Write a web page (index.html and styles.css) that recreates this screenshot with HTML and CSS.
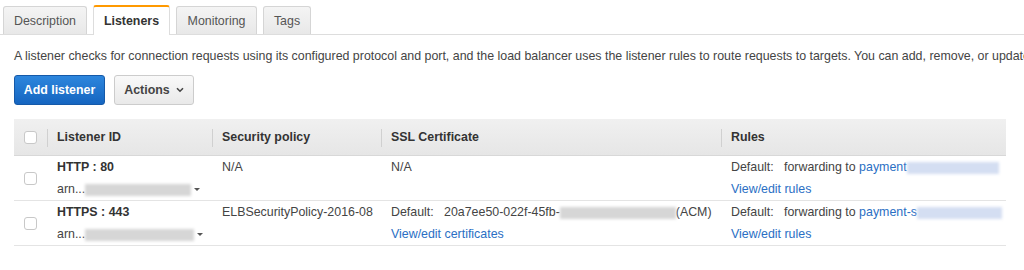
FILE: index.html
```html
<!DOCTYPE html>
<html>
<head>
<meta charset="utf-8">
<link rel="stylesheet" href="styles.css">
</head>
<body>
<div class="tabs">
  <div class="tab">Description</div>
  <div class="tab active">Listeners</div>
  <div class="tab">Monitoring</div>
  <div class="tab">Tags</div>
</div>
<p class="intro">A listener checks for connection requests using its configured protocol and port, and the load balancer uses the listener rules to route requests to targets. You can add, remove, or update listeners and their rules.</p>
<div class="toolbar">
  <button class="btn primary">Add listener</button>
  <button class="btn secondary">Actions <svg class="chev" width="8" height="6" viewBox="0 0 8 6"><path d="M1 1.2 L4 4.2 L7 1.2" fill="none" stroke="#444" stroke-width="1.6"/></svg></button>
</div>
<div class="table">
  <div class="row head">
    <div class="cell chk"><span class="box"></span></div>
    <div class="cell"><span class="sep"></span>Listener ID</div>
    <div class="cell"><span class="sep"></span>Security policy</div>
    <div class="cell"><span class="sep"></span>SSL Certificate</div>
    <div class="cell"><span class="sep"></span>Rules</div>
  </div>
  <div class="row">
    <div class="cell chk"><span class="box"></span></div>
    <div class="cell">
      <div class="line strong">HTTP : 80</div>
      <div class="line">arn...<span class="redact gray w106"></span><span class="caret"></span></div>
    </div>
    <div class="cell"><div class="line">N/A</div></div>
    <div class="cell"><div class="line">N/A</div></div>
    <div class="cell">
      <div class="line">Default:&nbsp;&nbsp; forwarding to <a class="link">payment</a><span class="redact blue w92"></span></div>
      <div class="line"><a class="link">View/edit rules</a></div>
    </div>
  </div>
  <div class="row">
    <div class="cell chk"><span class="box"></span></div>
    <div class="cell">
      <div class="line strong">HTTPS : 443</div>
      <div class="line">arn...<span class="redact gray w109"></span><span class="caret"></span></div>
    </div>
    <div class="cell"><div class="line">ELBSecurityPolicy-2016-08</div></div>
    <div class="cell">
      <div class="line">Default:&nbsp;&nbsp; 20a7ee50-022f-45fb-<span class="redact gray w116"></span>(ACM)</div>
      <div class="line"><a class="link">View/edit certificates</a></div>
    </div>
    <div class="cell">
      <div class="line">Default:&nbsp;&nbsp; forwarding to <a class="link">payment-s</a><span class="redact blue w85"></span></div>
      <div class="line"><a class="link">View/edit rules</a></div>
    </div>
  </div>
</div>
</body>
</html>
```
FILE: styles.css
```css
html, body {
  margin: 0;
  padding: 0;
  background: #fff;
  overflow: hidden;
}
body {
  font-family: "Liberation Sans", Arial, sans-serif;
  font-size: 12.4px;
  color: #444;
  width: 1024px;
  height: 270px;
}
.tabs {
  display: flex;
  gap: 6px;
  padding: 5px 0 0 3px;
  border-bottom: 1px solid #ddd;
  height: 29px;
  box-sizing: content-box;
}
.tab {
  height: 28px;
  margin-top: 1px;
  padding: 0;
  box-sizing: border-box;
  border: 1px solid #d5d5d5;
  border-bottom: none;
  border-radius: 3px 3px 0 0;
  background: linear-gradient(#f4f4f4, #e8e8e8);
  color: #555;
  display: flex;
  align-items: center;
  justify-content: center;
}
.tab:nth-child(1) { width: 84px; }
.tab:nth-child(2) { width: 77px; }
.tab:nth-child(3) { width: 81px; }
.tab:nth-child(4) { width: 48px; }
.tab.active {
  margin-top: 0;
  height: 30px;
  margin-bottom: -1px;
  background: #fff;
  border-top: 2px solid #f90;
  border-left-color: #ddd;
  border-right-color: #ddd;
  font-weight: bold;
  color: #333;
}
.intro {
  margin: 14px 0 0 14px;
  white-space: nowrap;
  line-height: 14px;
  color: #444;
}
.toolbar {
  display: flex;
  gap: 9px;
  margin: 12px 0 0 14px;
}
.btn {
  font-family: "Liberation Sans", Arial, sans-serif;
  font-size: 12.4px;
  font-weight: bold;
  height: 30px;
  border-radius: 3px;
  padding: 0;
  display: flex;
  align-items: center;
  justify-content: center;
  gap: 6px;
}
.btn.primary {
  width: 91px;
  color: #fff;
  background: linear-gradient(#2d86dd, #1565c0);
  border: 1px solid #1559a8;
}
.btn.secondary {
  width: 80px;
  color: #444;
  background: linear-gradient(#f9f9f9, #e9e9e9);
  border: 1px solid #ccc;
}
.chev { margin-top: -1px; }
.table {
  margin: 14px 0 0 14px;
  width: 992px;
}
.row {
  display: grid;
  grid-template-columns: 33px 165px 169px 340px 285px;
  border-bottom: 1px solid #e4e4e4;
  height: 45px;
  box-sizing: border-box;
}
.row.head {
  height: 37px;
  background: linear-gradient(#f0f0f0, #e6e6e6);
  border-bottom: 1px solid #d8d8d8;
  font-weight: bold;
  color: #333;
}
.cell {
  position: relative;
  padding: 0 10px;
  white-space: nowrap;
  overflow: hidden;
}
.head .cell {
  display: flex;
  align-items: center;
}
.sep {
  position: absolute;
  left: 0;
  top: 10px;
  height: 18px;
  border-left: 1px solid #d0d0d0;
}
.cell.chk {
  padding: 0 0 0 10px;
  display: flex;
  align-items: center;
}
.box {
  width: 13px;
  height: 13px;
  border: 1px solid #c8c8c8;
  border-radius: 3px;
  background: #fff;
  box-sizing: border-box;
}
.line {
  height: 22px;
  line-height: 22px;
}
.line.strong {
  font-weight: bold;
  color: #333;
}
.link {
  color: #2a6fc4;
  text-decoration: none;
}
.redact {
  display: inline-block;
  height: 12px;
  vertical-align: middle;
  filter: blur(1.5px);
}
.redact.gray { background: #d6d6d6; }
.redact.blue { background: #d4def2; }
.w106 { width: 106px; }
.w109 { width: 109px; }
.w116 { width: 116px; }
.w92 { width: 92px; }
.w85 { width: 85px; }
.caret {
  display: inline-block;
  vertical-align: middle;
  width: 0;
  height: 0;
  border-left: 3px solid transparent;
  border-right: 3px solid transparent;
  border-top: 3px solid #555;
  margin-left: 3px;
}
```
